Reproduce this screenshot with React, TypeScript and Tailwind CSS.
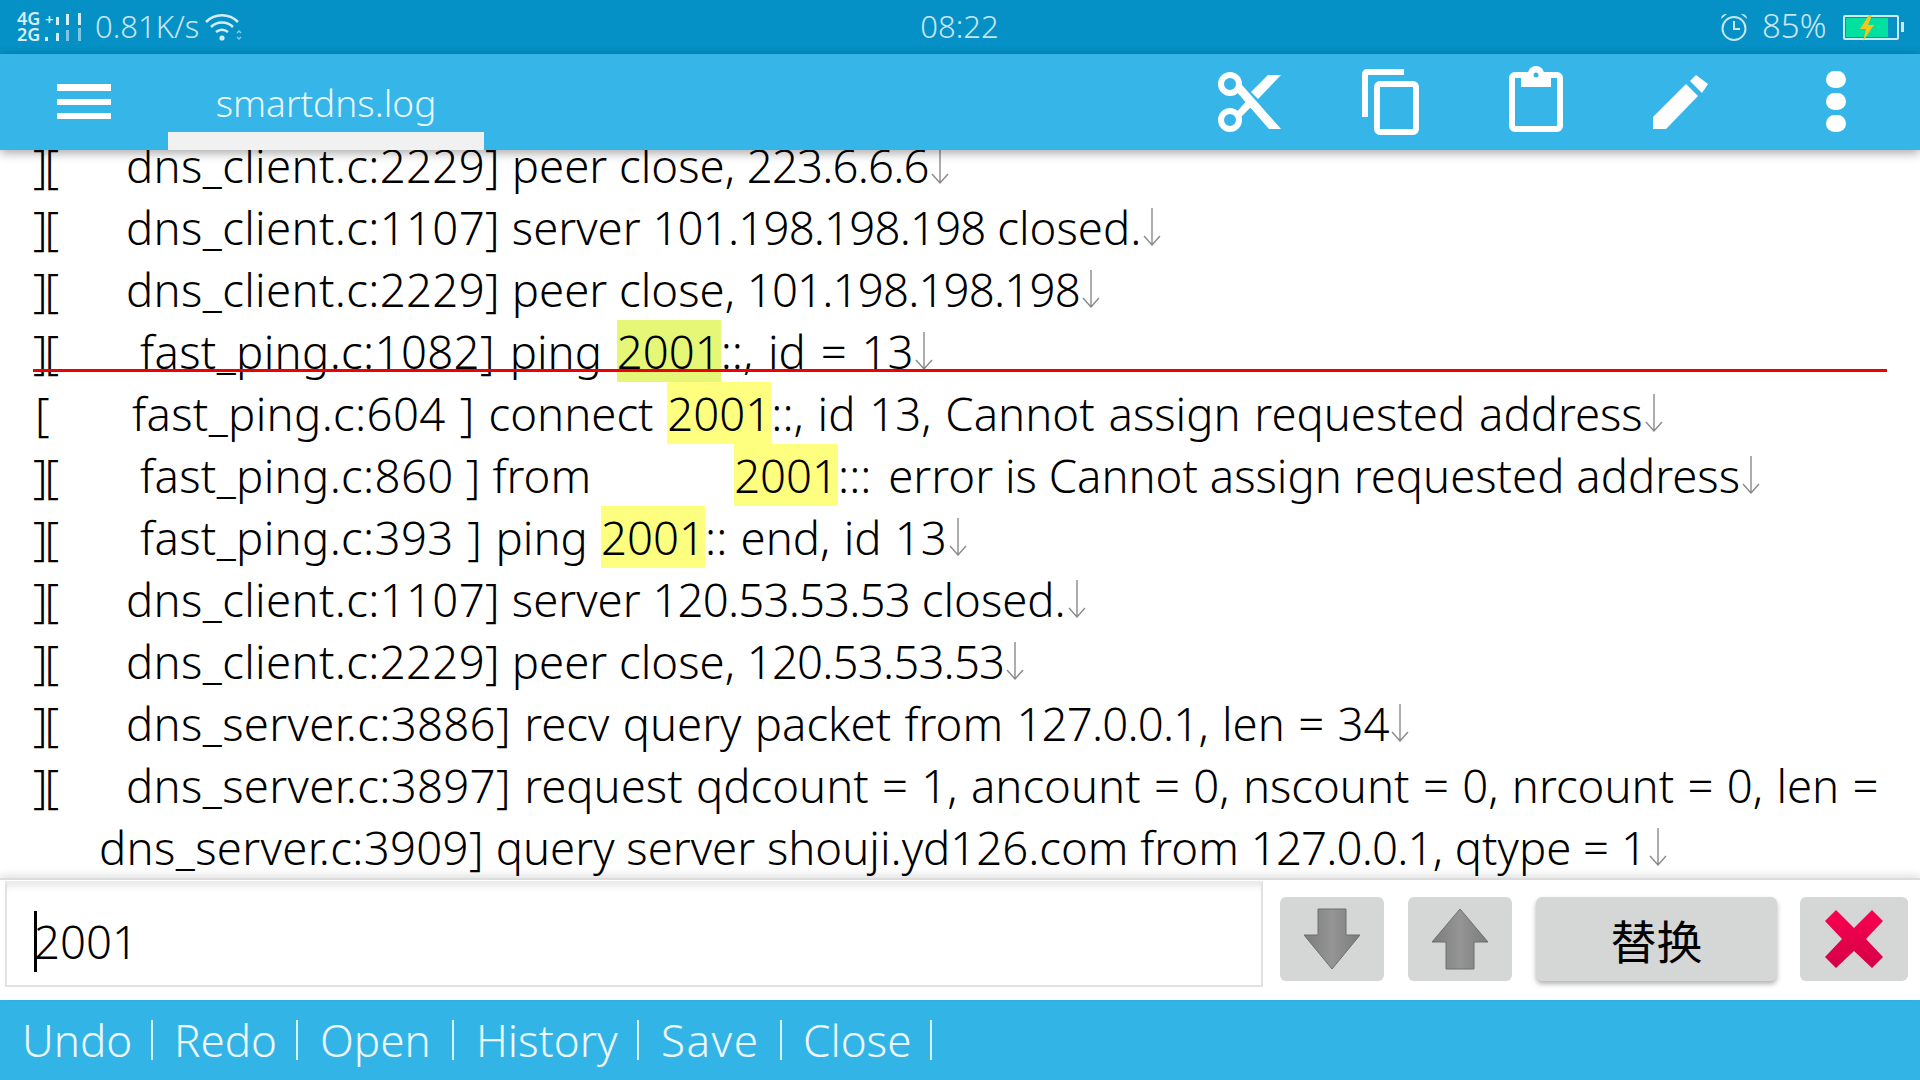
import React from "react";

// line-end mark of the editor
function Lf() {
  return (
    <svg width="18" height="38" viewBox="0 0 18 38" className="mt-[12px] ml-[2px] shrink-0">
      <path d="M9 0V37M1 28L9 37L17 28" fill="none" stroke="#8a8a8a" strokeWidth="1.4" />
    </svg>
  );
}

function Mark({ children }: { children: string }) {
  return <span className="inline-block h-[62px] bg-[#ffff7f]">{children}</span>;
}

function File({ children }: { children: string }) {
  return <span className="tracking-[0.35px]">{children}</span>;
}

function Ip({ children }: { children: string }) {
  return <span className="tracking-[-0.8px]">{children}</span>;
}

function Head({ children }: { children: string }) {
  return <span className="w-[93px] tracking-[-3px]">{children}</span>;
}

function PingHead({ children }: { children: string }) {
  return <span className="w-[107px] tracking-[-3px]">{children}</span>;
}

function StatusBar() {
  return (
    <div className="h-[54px] bg-[#0591c6] flex items-center text-[#c7e6f2] text-[31px] font-light pb-[2px]">
      <div className="w-[78px] ml-[17px] mt-[2px] flex flex-col gap-[3px] text-[#d6eef7] text-[18px] leading-[13px] font-semibold">
        <div className="flex items-end h-[12px]">
          <span className="w-[28px]">4G</span>
          <span className="w-[11px] text-[15px] leading-[12px]">+</span>
          <span className="w-[3px] h-[8px] bg-[#d6eef7] mr-[7px]" />
          <span className="w-[3px] h-[11px] bg-[#d6eef7] mr-[9px]" />
          <span className="w-[3px] h-[12px] bg-[#d6eef7]" />
        </div>
        <div className="flex items-end h-[13px]">
          <span className="w-[28px]">2G</span>
          <span className="w-[3px] h-[4px] bg-[#d6eef7] mr-[8px]" />
          <span className="w-[3px] h-[8px] bg-[#d6eef7] mr-[7px]" />
          <span className="w-[3px] h-[11px] bg-[#7fc6e2] mr-[9px]" />
          <span className="w-[3px] h-[13px] bg-[#7fc6e2]" />
        </div>
      </div>
      <span className="w-[110px]">0.81K/s</span>
      <svg width="38" height="30" viewBox="0 0 38 30" fill="none" stroke="#d6eef7" strokeWidth="2.6" className="mt-[2px]">
        <path d="M1 10C10 1 24 1 33 10" />
        <path d="M6 15C12 9 22 9 28 15" />
        <path d="M11 20C15 17 19 17 23 20" />
        <circle cx="17" cy="26" r="2.6" fill="#d6eef7" stroke="none" />
        <path d="M32 21l2-2 2 2M32 25l2 2 2-2" stroke="#8ccce6" strokeWidth="1.4" />
      </svg>
      <span className="ml-[677px] w-[79px] text-center">08:22</span>
      <svg width="30" height="30" viewBox="0 0 30 30" fill="none" stroke="#c7e6f2" strokeWidth="2" className="ml-[720px] mt-[2px]">
        <circle cx="15" cy="16.5" r="11.5" />
        <path d="M15 9v8h6" />
        <path d="M2 7a5 5 0 0 1 6-5zM28 7a5 5 0 0 0-6-5z" fill="#c7e6f2" stroke="none" />
      </svg>
      <span className="ml-[13px] w-[81px] text-[33px]">85%</span>
      <div className="relative w-[56px] h-[25px] mt-[2px] border-2 border-[#cfe8f2] rounded-[2px] p-[1px]">
        <div className="w-[42px] h-full bg-[#00e0a0]" />
        <svg width="18" height="26" viewBox="0 0 18 26" className="absolute left-[13px] -top-[2px]">
          <path d="M11 0L2 14H8L5 26L16 10H10L14 0Z" fill="#f5c518" />
        </svg>
      </div>
      <div className="w-[3px] h-[10px] ml-[2px] mt-[2px] bg-[#cfe8f2]" />
    </div>
  );
}

function Scissors() {
  return (
    <svg width="66" height="64" viewBox="1217 70 66 64" fill="#fff" className="absolute left-[1217px] top-[16px]">
      <ellipse cx="1230" cy="84" rx="9" ry="9" fill="none" stroke="#fff" strokeWidth="6" />
      <ellipse cx="1230" cy="120" rx="9" ry="9" fill="none" stroke="#fff" strokeWidth="6" />
      <polygon points="1268,75 1281,75 1258,99 1251,92" />
      <polygon points="1235,90 1242,85 1281,129 1269,129" />
      <polygon points="1235,114 1249,98 1254,104 1240,118" />
    </svg>
  );
}

function Copy() {
  return (
    <svg width="60" height="68" viewBox="1361 68 60 68" fill="none" stroke="#fff" strokeWidth="6" className="absolute left-[1361px] top-[14px]">
      <path d="M1365 117V74a2 2 0 0 1 2-2H1404" />
      <rect x="1377" y="84" width="39" height="48" rx="3" />
    </svg>
  );
}

function Paste() {
  return (
    <svg width="56" height="68" viewBox="1508 65 56 68" className="absolute left-[1508px] top-[11px]">
      <rect x="1512" y="75" width="48" height="54" rx="3" fill="none" stroke="#fff" strokeWidth="6" />
      <rect x="1521" y="72" width="30" height="15" fill="#fff" />
      <circle cx="1536" cy="74" r="8" fill="#fff" />
      <circle cx="1536" cy="75" r="2.5" fill="#36b5e8" />
    </svg>
  );
}

function Pencil() {
  return (
    <svg width="58" height="56" viewBox="1652 74 58 56" fill="#fff" className="absolute left-[1652px] top-[20px]">
      <polygon points="1653,129 1653,117 1686,84 1698,96 1666,129" />
      <polygon points="1696,75 1708,84 1702,93 1690,81" />
    </svg>
  );
}

function Toolbar() {
  return (
    <div className="relative z-10 h-[96px] bg-[#36b5e8] shadow-[0_3px_10px_rgba(0,0,0,0.35)]">
      <div className="absolute left-[57px] top-[30px] w-[54px] flex flex-col gap-[8px]">
        <div className="h-[7px] bg-white" />
        <div className="h-[6px] bg-white" />
        <div className="h-[6px] bg-white" />
      </div>
      <div className="absolute left-[168px] top-0 w-[316px] h-[96px] flex flex-col items-center justify-end">
        <span className="text-[37px] leading-[49px] mb-[5px] text-[#e9f7fd] font-light">smartdns.log</span>
        <div className="w-full h-[18px] bg-[#f1f1f1]" />
      </div>
      <Scissors />
      <Copy />
      <Paste />
      <Pencil />
      <div className="absolute left-[1826px] top-[17px] flex flex-col gap-[5px]">
        <div className="w-[20px] h-[17px] rounded-full bg-white" />
        <div className="w-[20px] h-[17px] rounded-full bg-white" />
        <div className="w-[20px] h-[17px] rounded-full bg-white" />
      </div>
    </div>
  );
}

function LogArea() {
  return (
    <div className="relative flex-1 overflow-hidden bg-white text-black text-[45.5px] leading-[62px] font-light whitespace-pre">
      <div className="-mt-[16px]">
        <div className="flex h-[62px] pl-[33px]"><Head>][</Head><span><File>dns_client.c:2229]</File> peer close, <Ip>223.6.6.6</Ip></span><Lf /></div>
        <div className="flex h-[62px] pl-[33px]"><Head>][</Head><span><File>dns_client.c:1107]</File> server <Ip>101.198.198.198</Ip> closed.</span><Lf /></div>
        <div className="flex h-[62px] pl-[33px]"><Head>][</Head><span><File>dns_client.c:2229]</File> peer close, <Ip>101.198.198.198</Ip></span><Lf /></div>
        <div className="flex h-[62px] pl-[33px]"><PingHead>][</PingHead><span className="[word-spacing:3px]"><File>fast_ping.c:1082]</File> ping <span className="inline-block h-[62px] bg-[#e6f676]">2001</span>::, id = 13</span><Lf /></div>
        <div className="flex h-[62px] pl-[35px]"><span className="w-[97px]">[</span><span className="[word-spacing:2px]"><File>fast_ping.c:604 ]</File> connect <Mark>2001</Mark>::, id 13, Cannot assign requested address</span><Lf /></div>
        <div className="flex h-[62px] pl-[33px]"><PingHead>][</PingHead><span><File>fast_ping.c:860 ]</File> from<span className="inline-block w-[143px]" /><Mark>2001</Mark>:::<span className="inline-block w-[5px]" /> error is Cannot assign requested address</span><Lf /></div>
        <div className="flex h-[62px] pl-[33px]"><PingHead>][</PingHead><span className="[word-spacing:1.5px]"><File>fast_ping.c:393 ]</File> ping <Mark>2001</Mark>:: end, id 13</span><Lf /></div>
        <div className="flex h-[62px] pl-[33px]"><Head>][</Head><span><File>dns_client.c:1107]</File> server <Ip>120.53.53.53</Ip> closed.</span><Lf /></div>
        <div className="flex h-[62px] pl-[33px]"><Head>][</Head><span><File>dns_client.c:2229]</File> peer close, <Ip>120.53.53.53</Ip></span><Lf /></div>
        <div className="flex h-[62px] pl-[33px]"><Head>][</Head><span className="[word-spacing:1.5px]"><File>dns_server.c:3886]</File> recv query packet from <Ip>127.0.0.1</Ip>, len = 34</span><Lf /></div>
        <div className="flex h-[62px] pl-[33px]"><Head>][</Head><span className="[word-spacing:1.5px]"><File>dns_server.c:3897]</File> request qdcount = 1, ancount = 0, nscount = 0, nrcount = 0, len =</span></div>
        <div className="flex h-[62px] pl-[99px]"><span><File>dns_server.c:3909]</File> query server shouji.yd126.com from <Ip>127.0.0.1</Ip>, qtype = 1</span><Lf /></div>
      </div>
      {/* current line marker */}
      <div className="absolute left-[33px] top-[219px] w-[1854px] h-[3px] bg-[#f00000]" />
    </div>
  );
}

function SearchPanel() {
  return (
    <div className="relative h-[122px] bg-white border-t-2 border-[#dcdcdc] pt-[1px] pl-[5px] flex shadow-[0_-3px_8px_rgba(0,0,0,0.12)]">
      <div className="w-[1258px] h-[106px] border-2 border-[#e2e2e2] border-t-[#ececec] bg-white flex items-center pl-[27px] pt-[14px] text-[45.5px] font-light text-black shadow-[inset_0_8px_8px_-6px_rgba(0,0,0,0.12)]">
        <span className="w-[3px] h-[61px] bg-black -mr-[3px]" />
        <span>2001</span>
      </div>
      <div className="w-[104px] h-[84px] mt-[16px] ml-[17px] rounded-[6px] bg-[#d5d7d6] flex items-center justify-center">
        <svg width="58" height="62" viewBox="0 0 58 62">
          <defs>
            <linearGradient id="ar" x1="0" x2="1" y1="0" y2="0">
              <stop offset="0" stopColor="#7b7b7b" />
              <stop offset="0.5" stopColor="#959595" />
              <stop offset="1" stopColor="#7b7b7b" />
            </linearGradient>
          </defs>
          <polygon points="15,1 43,1 43,27 57,27 29,61 1,27 15,27" fill="url(#ar)" stroke="#6f6f6f" strokeWidth="1" />
        </svg>
      </div>
      <div className="w-[104px] h-[84px] mt-[16px] ml-[24px] rounded-[6px] bg-[#d5d7d6] flex items-center justify-center">
        <svg width="58" height="62" viewBox="0 0 58 62">
          <polygon points="15,61 43,61 43,34 57,34 29,1 1,34 15,34" fill="url(#ar)" stroke="#6f6f6f" strokeWidth="1" />
        </svg>
      </div>
      <div className="w-[241px] h-[84px] mt-[16px] ml-[24px] rounded-[6px] bg-[#d5d7d6] shadow-[0_3px_5px_rgba(0,0,0,0.3)] flex items-center justify-center text-[46px] text-black font-['Noto_Sans_CJK_SC','Noto_Sans',sans-serif]">
        替换
      </div>
      <div className="w-[108px] h-[84px] mt-[16px] ml-[23px] rounded-[6px] bg-[#d5d7d6] flex items-center justify-center">
        <svg width="60" height="60" viewBox="0 0 60 60">
          <defs>
            <linearGradient id="cl" x1="0" x2="0" y1="0" y2="1">
              <stop offset="0" stopColor="#fa0050" />
              <stop offset="1" stopColor="#d40048" />
            </linearGradient>
          </defs>
          <polygon points="12,1 30,19 48,1 59,12 42,30 59,48 48,59 30,42 12,59 1,48 18,30 1,12" fill="url(#cl)" />
        </svg>
      </div>
    </div>
  );
}

const barItems = [
  { label: "Undo", cls: "w-[153px] pl-[22px]" },
  { label: "Redo", cls: "w-[145px] pl-[21px]" },
  { label: "Open", cls: "w-[156px] pl-[22px]" },
  { label: "History", cls: "w-[185px] pl-[22px]" },
  { label: "Save", cls: "w-[143px] pl-[22px] tracking-[1.5px]" },
  { label: "Close", cls: "w-[150px] pl-[21px]" },
];

function BottomBar() {
  return (
    <div className="h-[80px] bg-[#33b4e7] flex items-center text-[#eef8fc] text-[44px] font-light">
      {barItems.map((item) => (
        <div key={item.label} className={item.cls + " h-[40px] leading-[40px] border-r-2 border-[#d8f0fa]"}>
          {item.label}
        </div>
      ))}
    </div>
  );
}

export default function App() {
  return (
    <div className="w-[1920px] h-[1080px] overflow-hidden flex flex-col font-['Noto_Sans',sans-serif]">
      <StatusBar />
      <Toolbar />
      <LogArea />
      <SearchPanel />
      <BottomBar />
    </div>
  );
}
